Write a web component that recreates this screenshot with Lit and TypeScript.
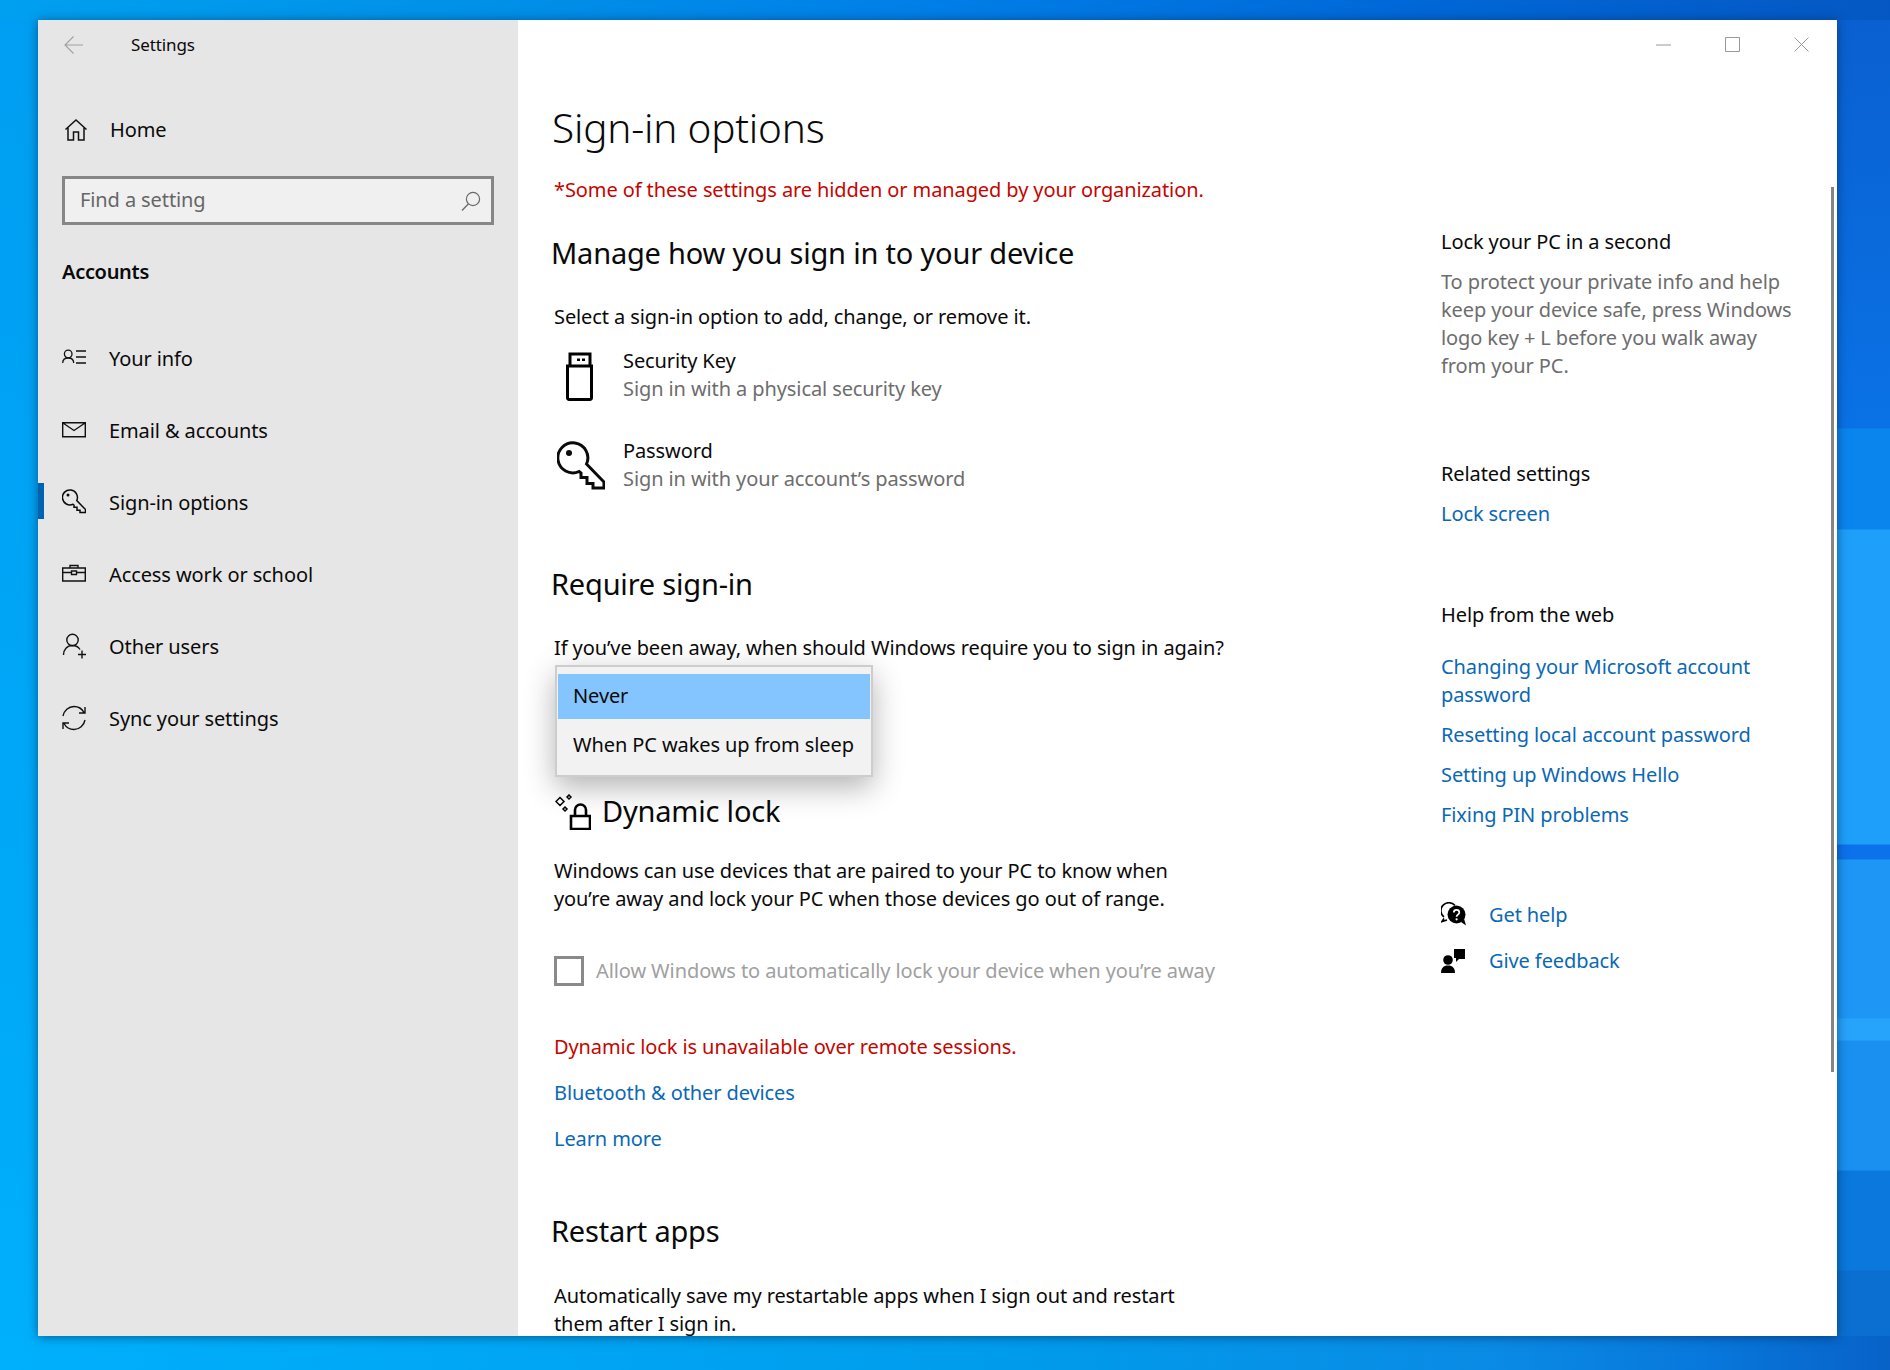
import { LitElement, html, css, svg } from 'lit';
import { customElement } from 'lit/decorators.js';

const keyShape = svg`
  <path d="M22 30.5A15 15 0 1 1 29.5 23L47 41V47H36V42.500H30V36.500H24V32Z" fill="none" stroke="currentColor" stroke-linejoin="miter"/>
  <circle cx="12" cy="12" r="3" fill="currentColor" stroke="none"/>`;

const icons = {
  back: svg`<svg class="i" width="20" height="20" viewBox="0 0 20 20"><path d="M19 10H1.500M9.500 1.500 1 10l8.500 8.500" fill="none" stroke="#a0a0a0" stroke-width="1.100"/></svg>`,
  home: svg`<svg class="i" width="24" height="24" viewBox="0 0 24 24"><path d="M1.500 11.500 12 2l10.500 9.500M4 9.500V22h5.500v-8h5v8H20V9.500" fill="none" stroke="#111" stroke-width="1.500"/></svg>`,
  search: svg`<svg class="i" width="20" height="20" viewBox="0 0 20 20"><circle cx="12" cy="8" r="6.600" fill="none" stroke="#6a6a6a" stroke-width="1.200"/><path d="M7.500 12.800 1 19.500" stroke="#6a6a6a" stroke-width="1.300"/></svg>`,
  info: svg`<svg class="i" width="24" height="24" viewBox="0 0 24 24"><circle cx="6.200" cy="8" r="3.800" fill="none" stroke="#111" stroke-width="1.300"/><path d="M.7 17c0-3.500 2.300-5 5.500-5s5.500 1.500 5.500 5M14 5h10M14 11h10M14 17h10" fill="none" stroke="#111" stroke-width="1.300"/></svg>`,
  mail: svg`<svg class="i" width="24" height="24" viewBox="0 0 24 24"><path d="M.7 4.700h22.600v14H.7zM1 5l11 7.500L23 5" fill="none" stroke="#111" stroke-width="1.400"/></svg>`,
  key: svg`<svg class="i" width="24" height="26" viewBox="0 0 48 52" stroke-width="3">${keyShape}</svg>`,
  work: svg`<svg class="i" width="24" height="24" viewBox="0 0 24 24"><path d="M.7 6h22.600v13H.7zM8 6V3.500h8V6M.7 10.500h8.800M14.500 10.500h8.800M9.500 9h5v3.500h-5z" fill="none" stroke="#111" stroke-width="1.400"/></svg>`,
  users: svg`<svg class="i" width="24" height="26" viewBox="0 0 24 26"><circle cx="10.500" cy="7" r="5.700" fill="none" stroke="#111" stroke-width="1.400"/><path d="M1.500 22c0-5.500 3.500-9.500 9-9.500 3.500 0 6 1.500 7.500 4M16 21.500h8M20 17.500v8" fill="none" stroke="#111" stroke-width="1.400"/></svg>`,
  sync: svg`<svg class="i" width="24" height="26" viewBox="0 0 24 26"><path d="M1 11C2 5.500 6.500 1.500 12 1.500c4.300 0 8 2.300 10 6M23 15c-1 5.500-5.500 9.500-11 9.500-4.300 0-8-2.300-10-6M23 2v6h-6M1 24v-6h6" fill="none" stroke="#111" stroke-width="1.400"/></svg>`,
  usb: svg`<svg class="i" width="28" height="50" viewBox="0 0 28 50"><path d="M5 15V3h20v12M2.500 15h24v32a1.500 1.500 0 0 1-1.500 1.500H4A1.500 1.500 0 0 1 2.500 47z" fill="none" stroke="#000" stroke-width="3"/><path d="M12 7.500h3v2.500h-3zM17 7.500h3v2.500h-3z" fill="#000"/></svg>`,
  bigKey: svg`<svg class="i" width="48" height="50" viewBox="0 0 48 50" stroke-width="3">${keyShape}</svg>`,
  lock: svg`<svg class="i" width="36" height="36" viewBox="0 0 36 36"><path d="M16 22h19v13H16zM20 22v-6a5.500 5.500 0 0 1 11 0v6" fill="none" stroke="#000" stroke-width="2.600"/><path d="M5 3.500 9 7.500 5 11.500 1 7.500zM14 1l2 2-2 2-2-2zM10 13l2 2-2 2-2-2z" fill="none" stroke="#000" stroke-width="1.500"/></svg>`,
  help: svg`<svg class="i" width="26" height="26" viewBox="0 0 26 26"><path d="M3 16.500 1 19.500l5-1.500M3 15A8 8 0 1 1 14 3.500" fill="none" stroke="#000" stroke-width="1.600"/><circle cx="15.500" cy="12.500" r="9" fill="#000"/><path d="M20 20l5 3.500-2-7z" fill="#000"/><path d="M12.800 10.500c0-3.400 5.500-3.400 5.500 0 0 2.300-2.700 2-2.700 4.200" fill="none" stroke="#fff" stroke-width="1.700"/><circle cx="15.600" cy="17.300" r="1.100" fill="#fff"/></svg>`,
  feedback: svg`<svg class="i" width="24" height="26" viewBox="0 0 24 26"><circle cx="7" cy="12" r="4.800" fill="#000"/><path d="M0 25c0-5 2.500-7.500 7-7.500s7 2.500 7 7.500z" fill="#000"/><path d="M13 1h11v10h-6l-3 3v-4h-2z" fill="#000"/></svg>`,
};

const nav = [
  { label: 'Your info', icon: icons.info, selected: false },
  { label: 'Email & accounts', icon: icons.mail, selected: false },
  { label: 'Sign-in options', icon: icons.key, selected: true },
  { label: 'Access work or school', icon: icons.work, selected: false },
  { label: 'Other users', icon: icons.users, selected: false },
  { label: 'Sync your settings', icon: icons.sync, selected: false },
];

const webLinks = [
  'Changing your Microsoft account password',
  'Resetting local account password',
  'Setting up Windows Hello',
  'Fixing PIN problems',
];

@customElement('app-root')
export class AppRoot extends LitElement {
  static styles = css`
    :host {
      display: block;
      width: 1890px;
      height: 1370px;
      overflow: hidden;
      font-family: 'Noto Sans', sans-serif;
      font-size: 20px;
      line-height: 28px;
      color: #0a0a0a;
      letter-spacing: -0.1px;
    }
    .desk {
      height: 100%;
      padding: 20px 0 0 38px;
      box-sizing: border-box;
      background-repeat: no-repeat;
      background-image:
        linear-gradient(90deg, #00a0f0, #0090e8 500px, #0080e8 900px, #0068d8 1400px, #0558c4),
        linear-gradient(90deg, #00b0fc, #009cec 1000px, #0a8ae4 1500px, #0878dc 1700px, #0862c8),
        linear-gradient(180deg, #009ef2, #00a8f8 900px, #00b0fc),
        linear-gradient(180deg, #0a5fcf, #0a72e6 428px, #0b85ee 429px 529px, #1e9ffa 530px 844px, #0b72ec 845px 859px, #1e96f5 860px 1018px, #26a4fb 1019px 1040px, #1a90f0 1041px 1170px, #0a78dc 1171px 1270px, #0a6fd0 1271px);
      background-size: 100% 20px, 100% 34px, 38px 100%, 53px 100%;
      background-position: 0 0, 0 1336px, 0 0, 1837px 0;
    }
    .window {
      display: flex;
      position: relative;
      width: 1799px;
      height: 1316px;
      overflow: hidden;
      background: #fff;
      box-shadow: 0 1px 10px rgba(0, 30, 70, 0.55);
    }
    .i {
      display: block;
      flex: none;
    }

    .sidebar {
      width: 480px;
      flex: none;
      background: #e6e6e6;
    }
    .title-row {
      display: flex;
      align-items: center;
      height: 50px;
      padding-left: 26px;
      gap: 47px;
      font-size: 17px;
    }
    .home {
      display: flex;
      align-items: center;
      gap: 22px;
      height: 60px;
      margin-top: 30px;
      padding-left: 26px;
    }
    .search {
      display: flex;
      align-items: center;
      justify-content: space-between;
      width: 432px;
      height: 49px;
      box-sizing: border-box;
      margin: 16px 0 0 24px;
      padding: 0 10px 0 15px;
      border: 3px solid #868686;
      background: #f0f0f0;
      color: #666;
    }
    .search span {
      padding-bottom: 2px;
    }
    .group {
      margin: 33px 0 36px 24px;
      font-weight: 600;
      letter-spacing: -0.3px;
    }
    .nav-item {
      display: flex;
      align-items: center;
      position: relative;
      height: 72px;
      padding-left: 24px;
      gap: 23px;
    }
    .nav-item span {
      padding-top: 2px;
    }
    .nav-item.selected::before {
      content: '';
      position: absolute;
      left: 0;
      top: 17px;
      width: 6px;
      height: 36px;
      background: #0063b1;
    }

    .main {
      flex: 1;
      min-width: 0;
    }
    .controls {
      display: flex;
      justify-content: flex-end;
      height: 49px;
      padding-right: 1px;
    }
    .ctl {
      display: flex;
      align-items: center;
      justify-content: center;
      width: 69px;
    }
    .body {
      display: flex;
    }
    .content {
      width: 923px;
      flex: none;
      box-sizing: border-box;
      padding: 29px 0 0 34px;
    }
    h1 {
      margin: 0;
      font-size: 40.500px;
      font-weight: 300;
      line-height: 60px;
      letter-spacing: -0.2px;
    }
    h2 {
      margin: 0 0 0 -1px;
      padding-bottom: 2px;
      font-size: 29px;
      font-weight: 400;
      line-height: 38px;
      letter-spacing: -0.2px;
    }
    p {
      margin: 0 0 0 2px;
    }
    .wrap {
      max-width: 640px;
    }
    .red {
      color: #c50500;
    }
    a {
      display: block;
      color: #0a68b5;
      text-decoration: none;
    }
    .option {
      display: flex;
      margin-left: 2px;
      height: 56px;
    }
    .option .slot {
      width: 69px;
      flex: none;
      box-sizing: border-box;
      padding-top: 4px;
    }
    .muted {
      color: #6d6d6d;
    }
    .combo {
      position: relative;
      height: 130px;
    }
    .popup {
      position: absolute;
      left: 3px;
      top: 3px;
      width: 318px;
      height: 112px;
      box-sizing: border-box;
      padding: 7px 1px;
      border: 2px solid #cdcdcd;
      background: #f2f2f2;
      box-shadow: 0 10px 28px rgba(0, 0, 0, 0.3);
    }
    .popup div {
      height: 45px;
      box-sizing: border-box;
      padding: 0 0 2px 15px;
      display: flex;
      align-items: center;
    }
    .popup .picked {
      background: #85c5ff;
      margin-bottom: 4px;
    }
    .lock-head {
      display: flex;
      align-items: center;
      gap: 12px;
      margin-left: 3px;
    }
    .check {
      display: flex;
      align-items: center;
      gap: 12px;
      margin-left: 2px;
      color: #a0a0a0;
    }
    .box {
      width: 30px;
      height: 30px;
      box-sizing: border-box;
      border: 3px solid #8a8a8a;
    }

    .aside {
      flex: 1;
      padding-top: 159px;
    }
    .aside p {
      margin: 0;
      max-width: 360px;
    }
    .tool {
      display: flex;
      align-items: center;
      gap: 22px;
    }
    .scroll {
      position: absolute;
      right: 3px;
      top: 167px;
      width: 3px;
      height: 885px;
      background: #858585;
    }
  `;

  render() {
    return html`
      <div class="desk">
        <div class="window">
          <div class="sidebar">
            <div class="title-row">${icons.back}<span>Settings</span></div>
            <div class="home">${icons.home}<span>Home</span></div>
            <div class="search"><span>Find a setting</span>${icons.search}</div>
            <div class="group">Accounts</div>
            ${nav.map(
              (n) => html`<div class="nav-item ${n.selected ? 'selected' : ''}">${n.icon}<span>${n.label}</span></div>`
            )}
          </div>
          <div class="main">
            <div class="controls">
              <div class="ctl"><svg width="16" height="16" viewBox="0 0 16 16"><path d="M0 8h15" stroke="#999" stroke-width="1"/></svg></div>
              <div class="ctl"><svg width="16" height="16" viewBox="0 0 16 16"><path d="M.5.500h14v14H.5z" fill="none" stroke="#999"/></svg></div>
              <div class="ctl"><svg width="16" height="16" viewBox="0 0 16 16"><path d="M.5.500l14 14M14.500.500l-14 14" stroke="#999"/></svg></div>
            </div>
            <div class="body">
              <div class="content">
                <h1>Sign-in options</h1>
                <p class="red" style="margin-top:18px">*Some of these settings are hidden or managed by your organization.</p>
                <h2 style="margin-top:30px">Manage how you sign in to your device</h2>
                <p style="margin-top:29px">Select a sign-in option to add, change, or remove it.</p>
                <div class="option" style="margin-top:16px">
                  <div class="slot" style="padding-left:11px">${icons.usb}</div>
                  <div>Security Key<div class="muted">Sign in with a physical security key</div></div>
                </div>
                <div class="option" style="margin-top:34px">
                  <div class="slot" style="padding-left:3px">${icons.bigKey}</div>
                  <div>Password<div class="muted">Sign in with your account’s password</div></div>
                </div>
                <h2 style="margin-top:72px">Require sign-in</h2>
                <p style="margin-top:29px">If you’ve been away, when should Windows require you to sign in again?</p>
                <div class="combo">
                  <div class="popup">
                    <div class="picked">Never</div>
                    <div>When PC wakes up from sleep</div>
                  </div>
                </div>
                <div class="lock-head">${icons.lock}<h2>Dynamic lock</h2></div>
                <p class="wrap" style="margin-top:25px">Windows can use devices that are paired to your PC to know when you’re away and lock your PC when those devices go out of range.</p>
                <div class="check" style="margin-top:43px"><span class="box"></span><span>Allow Windows to automatically lock your device when you’re away</span></div>
                <p class="red" style="margin-top:47px">Dynamic lock is unavailable over remote sessions.</p>
                <p style="margin-top:18px"><a href="#">Bluetooth &amp; other devices</a></p>
                <p style="margin-top:18px"><a href="#">Learn more</a></p>
                <h2 style="margin-top:59px">Restart apps</h2>
                <p class="wrap" style="margin-top:30px">Automatically save my restartable apps when I sign out and restart them after I sign in.</p>
              </div>
              <div class="aside">
                <div>Lock your PC in a second</div>
                <p class="muted" style="margin-top:12px">To protect your private info and help keep your device safe, press Windows logo key + L before you walk away from your PC.</p>
                <div style="margin-top:80px">Related settings</div>
                <a href="#" style="margin-top:12px">Lock screen</a>
                <div style="margin-top:73px">Help from the web</div>
                ${webLinks.map(
                  (l, i) => html`<a href="#" style="margin-top:${i ? 12 : 24}px;max-width:340px">${l}</a>`
                )}
                <div class="tool" style="margin-top:72px">${icons.help}<a href="#">Get help</a></div>
                <div class="tool" style="margin-top:18px">${icons.feedback}<a href="#" style="margin-left:2px">Give feedback</a></div>
              </div>
            </div>
          </div>
          <div class="scroll"></div>
        </div>
      </div>
    `;
  }
}
